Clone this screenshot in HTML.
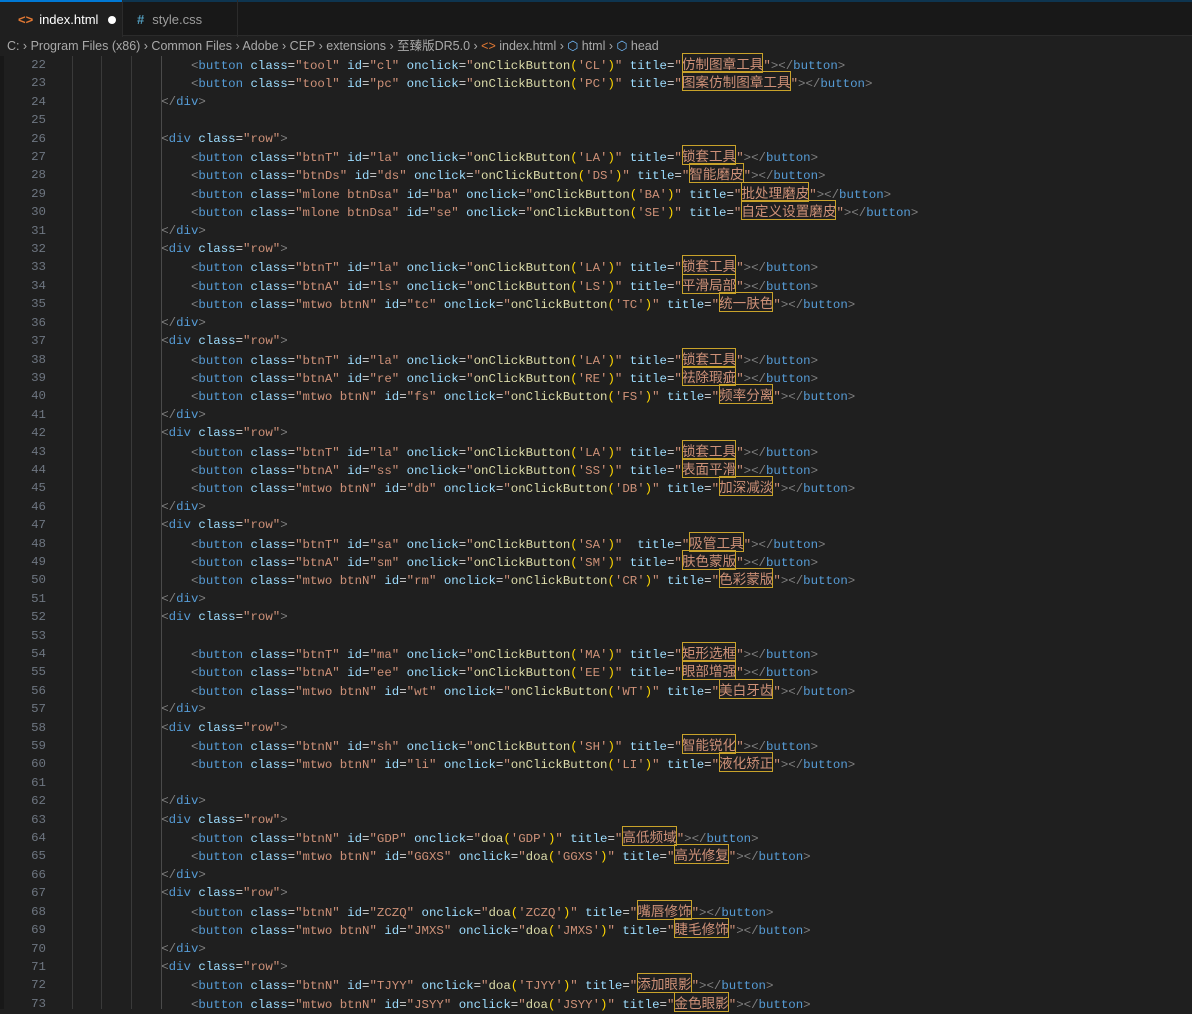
<!DOCTYPE html>
<html><head><meta charset="utf-8"><style>
html,body{margin:0;padding:0;background:#1f1f1f;width:1192px;height:1009px;overflow:hidden}
.tabs{position:absolute;left:0;top:0;width:1192px;height:36px;background:#181818;border-bottom:1px solid #2b2b2b;border-top:2px solid #0e3550;box-sizing:border-box}
.tab{position:absolute;top:-2px;height:37px;font:13px "Liberation Sans",sans-serif;line-height:39px;box-sizing:border-box}
.t1{left:0;width:122px;background:#1f1f1f;border-top:2px solid #0078d4;color:#fff;line-height:35px}
.t2{left:122px;width:116px;color:#9d9d9d;border-right:1px solid #2b2b2b;border-left:1px solid #2b2b2b}
.bc{position:absolute;left:0;top:37px;height:19px;width:1192px;font:12.5px "Liberation Sans","Noto Sans CJK SC",sans-serif;color:#a9a9a9;line-height:19px;white-space:pre}
.ln{position:absolute;left:0;top:56px;width:46px;text-align:right;color:#6e7681;font:12.4px "Liberation Mono",monospace}
.ln div,.code div{height:18.41px;line-height:18.41px;overflow:visible}
.code{position:absolute;left:72px;top:56px;font:12.4px "Liberation Mono","Noto Sans CJK SC",monospace;color:#d4d4d4;white-space:normal}
.code div{white-space:pre}
.guide{position:absolute;top:56px;width:1px;height:953px;background:#3a3a3a}
g{color:#808080}n{color:#569cd6}t{color:#9cdcfe}r{color:#ce9178}f{color:#dcdcaa}y{color:#ffd700}
z{font-family:"Noto Sans CJK SC",sans-serif;font-size:13.6px;color:#ce9178;outline:1px solid #c8a22a;outline-offset:-1px;line-height:14px}
</style></head><body>
<div class="tabs">
<div class="tab t1"><span style="color:#e37933;margin:0 6px 0 18px;font-weight:bold">&lt;&gt;</span>index.html<span style="display:inline-block;width:8px;height:8px;border-radius:50%;background:#fff;margin-left:10px"></span></div>
<div class="tab t2"><span style="color:#519aba;margin:0 8px 0 14px;font-weight:bold">#</span>style.css</div>
</div>
<div class="bc">  C: <span>›</span> Program Files (x86) › Common Files › Adobe › CEP › extensions › 至臻版DR5.0 › <span style="color:#e37933">&lt;&gt;</span> index.html › <span style="color:#75beff">⬡</span> html › <span style="color:#75beff">⬡</span> head</div>
<div style="position:absolute;left:0;top:56px;width:4px;height:953px;background:#181818"></div>
<div class="guide" style="left:72px"></div><div class="guide" style="left:101px"></div><div class="guide" style="left:131px"></div><div class="guide" style="left:161px;background:#4a4a4a"></div>
<div class="ln"><div>22</div><div>23</div><div>24</div><div>25</div><div>26</div><div>27</div><div>28</div><div>29</div><div>30</div><div>31</div><div>32</div><div>33</div><div>34</div><div>35</div><div>36</div><div>37</div><div>38</div><div>39</div><div>40</div><div>41</div><div>42</div><div>43</div><div>44</div><div>45</div><div>46</div><div>47</div><div>48</div><div>49</div><div>50</div><div>51</div><div>52</div><div>53</div><div>54</div><div>55</div><div>56</div><div>57</div><div>58</div><div>59</div><div>60</div><div>61</div><div>62</div><div>63</div><div>64</div><div>65</div><div>66</div><div>67</div><div>68</div><div>69</div><div>70</div><div>71</div><div>72</div><div>73</div></div>
<div class="code"><div>                <g>&lt;</g><n>button</n> <t>class</t>=<r>"tool"</r> <t>id</t>=<r>"cl"</r> <t>onclick</t>=<r>"</r><f>onClickButton</f><y>(</y><r>'CL'</r><y>)</y><r>"</r> <t>title</t>=<r>"<z>仿制图章工具</z>"</r><g>&gt;&lt;/</g><n>button</n><g>&gt;</g></div><div>                <g>&lt;</g><n>button</n> <t>class</t>=<r>"tool"</r> <t>id</t>=<r>"pc"</r> <t>onclick</t>=<r>"</r><f>onClickButton</f><y>(</y><r>'PC'</r><y>)</y><r>"</r> <t>title</t>=<r>"<z>图案仿制图章工具</z>"</r><g>&gt;&lt;/</g><n>button</n><g>&gt;</g></div><div>            <g>&lt;/</g><n>div</n><g>&gt;</g></div><div> </div><div>            <g>&lt;</g><n>div</n> <t>class</t>=<r>"row"</r><g>&gt;</g></div><div>                <g>&lt;</g><n>button</n> <t>class</t>=<r>"btnT"</r> <t>id</t>=<r>"la"</r> <t>onclick</t>=<r>"</r><f>onClickButton</f><y>(</y><r>'LA'</r><y>)</y><r>"</r> <t>title</t>=<r>"<z>锁套工具</z>"</r><g>&gt;&lt;/</g><n>button</n><g>&gt;</g></div><div>                <g>&lt;</g><n>button</n> <t>class</t>=<r>"btnDs"</r> <t>id</t>=<r>"ds"</r> <t>onclick</t>=<r>"</r><f>onClickButton</f><y>(</y><r>'DS'</r><y>)</y><r>"</r> <t>title</t>=<r>"<z>智能磨皮</z>"</r><g>&gt;&lt;/</g><n>button</n><g>&gt;</g></div><div>                <g>&lt;</g><n>button</n> <t>class</t>=<r>"mlone btnDsa"</r> <t>id</t>=<r>"ba"</r> <t>onclick</t>=<r>"</r><f>onClickButton</f><y>(</y><r>'BA'</r><y>)</y><r>"</r> <t>title</t>=<r>"<z>批处理磨皮</z>"</r><g>&gt;&lt;/</g><n>button</n><g>&gt;</g></div><div>                <g>&lt;</g><n>button</n> <t>class</t>=<r>"mlone btnDsa"</r> <t>id</t>=<r>"se"</r> <t>onclick</t>=<r>"</r><f>onClickButton</f><y>(</y><r>'SE'</r><y>)</y><r>"</r> <t>title</t>=<r>"<z>自定义设置磨皮</z>"</r><g>&gt;&lt;/</g><n>button</n><g>&gt;</g></div><div>            <g>&lt;/</g><n>div</n><g>&gt;</g></div><div>            <g>&lt;</g><n>div</n> <t>class</t>=<r>"row"</r><g>&gt;</g></div><div>                <g>&lt;</g><n>button</n> <t>class</t>=<r>"btnT"</r> <t>id</t>=<r>"la"</r> <t>onclick</t>=<r>"</r><f>onClickButton</f><y>(</y><r>'LA'</r><y>)</y><r>"</r> <t>title</t>=<r>"<z>锁套工具</z>"</r><g>&gt;&lt;/</g><n>button</n><g>&gt;</g></div><div>                <g>&lt;</g><n>button</n> <t>class</t>=<r>"btnA"</r> <t>id</t>=<r>"ls"</r> <t>onclick</t>=<r>"</r><f>onClickButton</f><y>(</y><r>'LS'</r><y>)</y><r>"</r> <t>title</t>=<r>"<z>平滑局部</z>"</r><g>&gt;&lt;/</g><n>button</n><g>&gt;</g></div><div>                <g>&lt;</g><n>button</n> <t>class</t>=<r>"mtwo btnN"</r> <t>id</t>=<r>"tc"</r> <t>onclick</t>=<r>"</r><f>onClickButton</f><y>(</y><r>'TC'</r><y>)</y><r>"</r> <t>title</t>=<r>"<z>统一肤色</z>"</r><g>&gt;&lt;/</g><n>button</n><g>&gt;</g></div><div>            <g>&lt;/</g><n>div</n><g>&gt;</g></div><div>            <g>&lt;</g><n>div</n> <t>class</t>=<r>"row"</r><g>&gt;</g></div><div>                <g>&lt;</g><n>button</n> <t>class</t>=<r>"btnT"</r> <t>id</t>=<r>"la"</r> <t>onclick</t>=<r>"</r><f>onClickButton</f><y>(</y><r>'LA'</r><y>)</y><r>"</r> <t>title</t>=<r>"<z>锁套工具</z>"</r><g>&gt;&lt;/</g><n>button</n><g>&gt;</g></div><div>                <g>&lt;</g><n>button</n> <t>class</t>=<r>"btnA"</r> <t>id</t>=<r>"re"</r> <t>onclick</t>=<r>"</r><f>onClickButton</f><y>(</y><r>'RE'</r><y>)</y><r>"</r> <t>title</t>=<r>"<z>祛除瑕疵</z>"</r><g>&gt;&lt;/</g><n>button</n><g>&gt;</g></div><div>                <g>&lt;</g><n>button</n> <t>class</t>=<r>"mtwo btnN"</r> <t>id</t>=<r>"fs"</r> <t>onclick</t>=<r>"</r><f>onClickButton</f><y>(</y><r>'FS'</r><y>)</y><r>"</r> <t>title</t>=<r>"<z>频率分离</z>"</r><g>&gt;&lt;/</g><n>button</n><g>&gt;</g></div><div>            <g>&lt;/</g><n>div</n><g>&gt;</g></div><div>            <g>&lt;</g><n>div</n> <t>class</t>=<r>"row"</r><g>&gt;</g></div><div>                <g>&lt;</g><n>button</n> <t>class</t>=<r>"btnT"</r> <t>id</t>=<r>"la"</r> <t>onclick</t>=<r>"</r><f>onClickButton</f><y>(</y><r>'LA'</r><y>)</y><r>"</r> <t>title</t>=<r>"<z>锁套工具</z>"</r><g>&gt;&lt;/</g><n>button</n><g>&gt;</g></div><div>                <g>&lt;</g><n>button</n> <t>class</t>=<r>"btnA"</r> <t>id</t>=<r>"ss"</r> <t>onclick</t>=<r>"</r><f>onClickButton</f><y>(</y><r>'SS'</r><y>)</y><r>"</r> <t>title</t>=<r>"<z>表面平滑</z>"</r><g>&gt;&lt;/</g><n>button</n><g>&gt;</g></div><div>                <g>&lt;</g><n>button</n> <t>class</t>=<r>"mtwo btnN"</r> <t>id</t>=<r>"db"</r> <t>onclick</t>=<r>"</r><f>onClickButton</f><y>(</y><r>'DB'</r><y>)</y><r>"</r> <t>title</t>=<r>"<z>加深减淡</z>"</r><g>&gt;&lt;/</g><n>button</n><g>&gt;</g></div><div>            <g>&lt;/</g><n>div</n><g>&gt;</g></div><div>            <g>&lt;</g><n>div</n> <t>class</t>=<r>"row"</r><g>&gt;</g></div><div>                <g>&lt;</g><n>button</n> <t>class</t>=<r>"btnT"</r> <t>id</t>=<r>"sa"</r> <t>onclick</t>=<r>"</r><f>onClickButton</f><y>(</y><r>'SA'</r><y>)</y><r>"</r>  <t>title</t>=<r>"<z>吸管工具</z>"</r><g>&gt;&lt;/</g><n>button</n><g>&gt;</g></div><div>                <g>&lt;</g><n>button</n> <t>class</t>=<r>"btnA"</r> <t>id</t>=<r>"sm"</r> <t>onclick</t>=<r>"</r><f>onClickButton</f><y>(</y><r>'SM'</r><y>)</y><r>"</r> <t>title</t>=<r>"<z>肤色蒙版</z>"</r><g>&gt;&lt;/</g><n>button</n><g>&gt;</g></div><div>                <g>&lt;</g><n>button</n> <t>class</t>=<r>"mtwo btnN"</r> <t>id</t>=<r>"rm"</r> <t>onclick</t>=<r>"</r><f>onClickButton</f><y>(</y><r>'CR'</r><y>)</y><r>"</r> <t>title</t>=<r>"<z>色彩蒙版</z>"</r><g>&gt;&lt;/</g><n>button</n><g>&gt;</g></div><div>            <g>&lt;/</g><n>div</n><g>&gt;</g></div><div>            <g>&lt;</g><n>div</n> <t>class</t>=<r>"row"</r><g>&gt;</g></div><div> </div><div>                <g>&lt;</g><n>button</n> <t>class</t>=<r>"btnT"</r> <t>id</t>=<r>"ma"</r> <t>onclick</t>=<r>"</r><f>onClickButton</f><y>(</y><r>'MA'</r><y>)</y><r>"</r> <t>title</t>=<r>"<z>矩形选框</z>"</r><g>&gt;&lt;/</g><n>button</n><g>&gt;</g></div><div>                <g>&lt;</g><n>button</n> <t>class</t>=<r>"btnA"</r> <t>id</t>=<r>"ee"</r> <t>onclick</t>=<r>"</r><f>onClickButton</f><y>(</y><r>'EE'</r><y>)</y><r>"</r> <t>title</t>=<r>"<z>眼部增强</z>"</r><g>&gt;&lt;/</g><n>button</n><g>&gt;</g></div><div>                <g>&lt;</g><n>button</n> <t>class</t>=<r>"mtwo btnN"</r> <t>id</t>=<r>"wt"</r> <t>onclick</t>=<r>"</r><f>onClickButton</f><y>(</y><r>'WT'</r><y>)</y><r>"</r> <t>title</t>=<r>"<z>美白牙齿</z>"</r><g>&gt;&lt;/</g><n>button</n><g>&gt;</g></div><div>            <g>&lt;/</g><n>div</n><g>&gt;</g></div><div>            <g>&lt;</g><n>div</n> <t>class</t>=<r>"row"</r><g>&gt;</g></div><div>                <g>&lt;</g><n>button</n> <t>class</t>=<r>"btnN"</r> <t>id</t>=<r>"sh"</r> <t>onclick</t>=<r>"</r><f>onClickButton</f><y>(</y><r>'SH'</r><y>)</y><r>"</r> <t>title</t>=<r>"<z>智能锐化</z>"</r><g>&gt;&lt;/</g><n>button</n><g>&gt;</g></div><div>                <g>&lt;</g><n>button</n> <t>class</t>=<r>"mtwo btnN"</r> <t>id</t>=<r>"li"</r> <t>onclick</t>=<r>"</r><f>onClickButton</f><y>(</y><r>'LI'</r><y>)</y><r>"</r> <t>title</t>=<r>"<z>液化矫正</z>"</r><g>&gt;&lt;/</g><n>button</n><g>&gt;</g></div><div> </div><div>            <g>&lt;/</g><n>div</n><g>&gt;</g></div><div>            <g>&lt;</g><n>div</n> <t>class</t>=<r>"row"</r><g>&gt;</g></div><div>                <g>&lt;</g><n>button</n> <t>class</t>=<r>"btnN"</r> <t>id</t>=<r>"GDP"</r> <t>onclick</t>=<r>"</r><f>doa</f><y>(</y><r>'GDP'</r><y>)</y><r>"</r> <t>title</t>=<r>"<z>高低频域</z>"</r><g>&gt;&lt;/</g><n>button</n><g>&gt;</g></div><div>                <g>&lt;</g><n>button</n> <t>class</t>=<r>"mtwo btnN"</r> <t>id</t>=<r>"GGXS"</r> <t>onclick</t>=<r>"</r><f>doa</f><y>(</y><r>'GGXS'</r><y>)</y><r>"</r> <t>title</t>=<r>"<z>高光修复</z>"</r><g>&gt;&lt;/</g><n>button</n><g>&gt;</g></div><div>            <g>&lt;/</g><n>div</n><g>&gt;</g></div><div>            <g>&lt;</g><n>div</n> <t>class</t>=<r>"row"</r><g>&gt;</g></div><div>                <g>&lt;</g><n>button</n> <t>class</t>=<r>"btnN"</r> <t>id</t>=<r>"ZCZQ"</r> <t>onclick</t>=<r>"</r><f>doa</f><y>(</y><r>'ZCZQ'</r><y>)</y><r>"</r> <t>title</t>=<r>"<z>嘴唇修饰</z>"</r><g>&gt;&lt;/</g><n>button</n><g>&gt;</g></div><div>                <g>&lt;</g><n>button</n> <t>class</t>=<r>"mtwo btnN"</r> <t>id</t>=<r>"JMXS"</r> <t>onclick</t>=<r>"</r><f>doa</f><y>(</y><r>'JMXS'</r><y>)</y><r>"</r> <t>title</t>=<r>"<z>睫毛修饰</z>"</r><g>&gt;&lt;/</g><n>button</n><g>&gt;</g></div><div>            <g>&lt;/</g><n>div</n><g>&gt;</g></div><div>            <g>&lt;</g><n>div</n> <t>class</t>=<r>"row"</r><g>&gt;</g></div><div>                <g>&lt;</g><n>button</n> <t>class</t>=<r>"btnN"</r> <t>id</t>=<r>"TJYY"</r> <t>onclick</t>=<r>"</r><f>doa</f><y>(</y><r>'TJYY'</r><y>)</y><r>"</r> <t>title</t>=<r>"<z>添加眼影</z>"</r><g>&gt;&lt;/</g><n>button</n><g>&gt;</g></div><div>                <g>&lt;</g><n>button</n> <t>class</t>=<r>"mtwo btnN"</r> <t>id</t>=<r>"JSYY"</r> <t>onclick</t>=<r>"</r><f>doa</f><y>(</y><r>'JSYY'</r><y>)</y><r>"</r> <t>title</t>=<r>"<z>金色眼影</z>"</r><g>&gt;&lt;/</g><n>button</n><g>&gt;</g></div></div>
</body></html>
